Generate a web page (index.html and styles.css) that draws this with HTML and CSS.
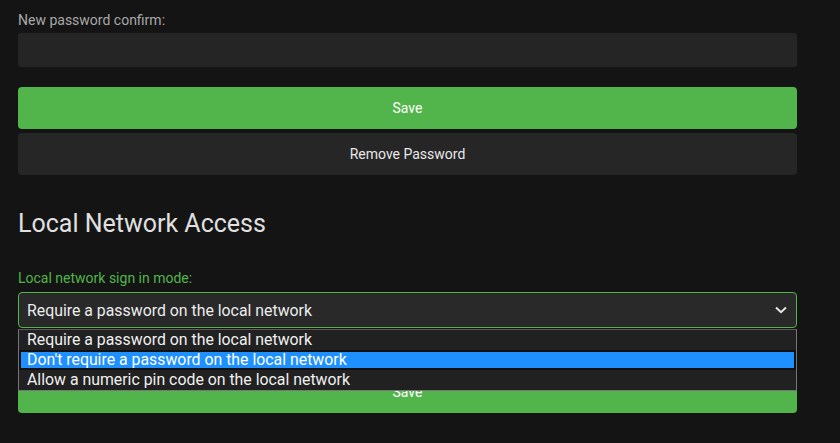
FILE: index.html
```html
<!DOCTYPE html>
<html lang="en">
<head>
<meta charset="utf-8">
<title>Password settings</title>
<link rel="stylesheet" href="styles.css">
</head>
<body>
<div class="page">
  <div class="field">
    <label class="field-label" for="pw2">New password confirm:</label>
    <input class="text-input" id="pw2" type="password">
  </div>
  <div class="actions">
    <button class="btn btn-primary" type="button">Save</button>
    <button class="btn btn-secondary" type="button">Remove Password</button>
  </div>

  <h2 class="section-title">Local Network Access</h2>

  <div class="field select-field">
    <label class="field-label field-label-focused" for="mode">Local network sign in mode:</label>
    <div class="select-box" id="mode">
      <span class="select-value">Require a password on the local network</span>
      <svg class="chevron" width="12" height="8" viewBox="0 0 12 8" aria-hidden="true">
        <polyline points="1,1.5 6,6.2 11,1.5" fill="none" stroke="#e6e6e6" stroke-width="2"/>
      </svg>
    </div>
    <ul class="dropdown">
      <li class="option">Require a password on the local network</li>
      <li class="option option-active">Don't require a password on the local network</li>
      <li class="option">Allow a numeric pin code on the local network</li>
    </ul>
  </div>
  <div class="actions">
    <button class="btn btn-primary" type="button">Save</button>
  </div>
</div>
</body>
</html>
```

FILE: styles.css
```css
html, body {
  margin: 0;
  padding: 0;
  background: #141414;
  height: 100%;
  overflow: hidden;
}

body {
  font-family: Roboto, "Noto Sans", "Liberation Sans", sans-serif;
  color: #e6e6e6;
}

.page {
  padding: 11px 43px 0 18px;
}

.field {
  display: flex;
  flex-direction: column;
}

.field-label {
  font-size: 14px;
  line-height: 18px;
  color: #a8a8a8;
}

.field-label-focused {
  color: #52b54b;
}

.text-input {
  margin: 4px 0 0;
  height: 34px;
  box-sizing: border-box;
  border: 0;
  border-radius: 3px;
  background: #252525;
  padding: 0 8px;
  outline: none;
}

.actions {
  display: flex;
  flex-direction: column;
  gap: 4px;
  margin-top: 20px;
}

.btn {
  height: 42px;
  border: 0;
  border-radius: 4px;
  font-family: inherit;
  font-size: 14px;
  color: #f2f2f2;
  padding: 0;
  cursor: pointer;
}

.btn-primary {
  background: #52b54b;
  color: #fff;
}

.btn-secondary {
  background: #262626;
  color: #e8e8e8;
}

.section-title {
  margin: 34px 0 0;
  font-size: 25px;
  line-height: 30px;
  font-weight: 400;
  color: #e0e0e0;
}

.select-field {
  margin-top: 30px;
  position: relative;
}

.select-box {
  margin-top: 5px;
  height: 36px;
  box-sizing: border-box;
  border: 1px solid #52b54b;
  border-radius: 4px;
  background: #292929;
  display: flex;
  align-items: center;
  justify-content: space-between;
  padding: 0 9px 0 8px;
  font-size: 15.85px;
  color: #ececec;
}

.chevron {
  display: block;
}

.dropdown {
  position: absolute;
  top: 100%;
  left: 0;
  right: 0;
  margin: 1px 0 0;
  padding: 0;
  list-style: none;
  background: #212121;
  border: 1px solid #767676;
  border-top-color: #5a5a5a;
  z-index: 2;
}

.option {
  height: 20px;
  line-height: 20px;
  font-size: 15.85px;
  color: #f0f0f0;
  padding: 0 0 0 8px;
}

.option-active {
  background: #1e90ff;
  color: #fff;
  box-shadow: inset 0 0 0 2px #111;
}

.select-field + .actions {
  margin-top: 43px;
}
```
